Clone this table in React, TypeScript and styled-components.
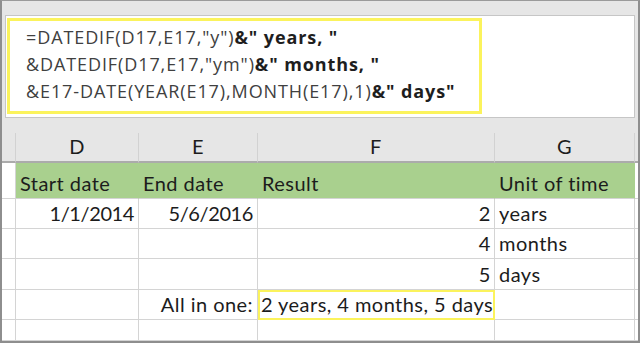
import React from "react";
import styled, { createGlobalStyle } from "styled-components";

const GlobalStyle = createGlobalStyle`
  html, body {
    margin: 0;
    padding: 0;
    background: #ffffff;
  }
  body {
    font-family: "Lato", "Liberation Sans", sans-serif;
  }
`;

const Frame = styled.div`
  width: 640px;
  height: 343px;
  box-sizing: border-box;
  border-top: 1px solid #9a9a9a;
  border-left: 2px solid #8e8e8e;
  border-right: 2px solid #8e8e8e;
  border-bottom: 2px solid #8e8e8e;
  background: #e6e6e6;
  overflow: hidden;
  display: flex;
  flex-direction: column;
`;

const FormulaBar = styled.div`
  margin: 14px 3px 0 3px;
  height: 103px;
  box-sizing: border-box;
  background: #ffffff;
  border: 1px solid #c6c6c6;
  padding: 2px 0 0 1px;
`;

const Highlight = styled.div`
  width: 475px;
  height: 96px;
  box-sizing: border-box;
  border: 3px solid #fbf35c;
  padding: 3px 0 0 16px;
  font-family: "Open Sans", "Noto Sans", sans-serif;
  font-size: 18px;
  letter-spacing: 0.9px;
  line-height: 27px;
  color: #404040;
`;

const FormulaLine = styled.div`
  white-space: pre;
`;

const Literal = styled.b`
  font-weight: 700;
  color: #1e1e1e;
`;

const Sheet = styled.div`
  margin-top: 15px;
  display: grid;
  grid-template-columns: 14px 123px 119px 237px 140px 1fr;
  grid-template-rows: 30px 36px 30px 30px 31px 30px 1fr;
  flex: 1;
  background: #ffffff;
`;

type Kind = "col" | "green" | "body" | "corner";

const Cell = styled.div<{
  $kind?: Kind;
  $align?: "left" | "right" | "center";
  $mark?: boolean;
  $num?: boolean;
}>`
  display: flex;
  align-items: flex-end;
  justify-content: ${(p) =>
    p.$align === "right" ? "flex-end" : p.$align === "center" ? "center" : "flex-start"};
  box-sizing: border-box;
  padding: 0 4px 5px 4px;
  font-size: 20px;
  line-height: 20px;
  letter-spacing: ${(p) => (p.$num ? "-0.4px" : "0.45px")};
  color: #1c1c1c;
  white-space: nowrap;
  overflow: visible;
  background: ${(p) =>
    p.$kind === "col" || p.$kind === "corner" ? "#e6e6e6" : p.$kind === "green" ? "#a9d08e" : "#ffffff"};
  border-right: 1px solid
    ${(p) => (p.$kind === "green" ? "#a9d08e" : p.$kind === "col" || p.$kind === "corner" ? "#d2d2d2" : "#d4d4d4")};
  border-bottom: ${(p) =>
    p.$kind === "col" || p.$kind === "corner" ? "2px solid #ababab" : "1px solid #d4d4d4"};
  ${(p) =>
    p.$mark &&
    `
    outline: 2px solid #fbf35c;
    outline-offset: -2px;
    padding-left: 3px;
  `}
`;

const rows = [
  { d: "1/1/2014", e: "5/6/2016", f: "2", g: "years" },
  { d: "", e: "", f: "4", g: "months" },
  { d: "", e: "", f: "5", g: "days" },
];

const App: React.FC = () => {
  return (
    <>
      <GlobalStyle />
      <Frame>
        <FormulaBar>
          <Highlight>
            <FormulaLine>
              =DATEDIF(D17,E17,"y")<Literal>&amp;" years, "</Literal>
            </FormulaLine>
            <FormulaLine>
              &amp;DATEDIF(D17,E17,"ym")<Literal>&amp;" months, "</Literal>
            </FormulaLine>
            <FormulaLine>
              &amp;E17-DATE(YEAR(E17),MONTH(E17),1)<Literal>&amp;" days"</Literal>
            </FormulaLine>
          </Highlight>
        </FormulaBar>

        <Sheet>
          <Cell $kind="corner" />
          <Cell $kind="col" $align="center">D</Cell>
          <Cell $kind="col" $align="center">E</Cell>
          <Cell $kind="col" $align="center">F</Cell>
          <Cell $kind="col" $align="center">G</Cell>
          <Cell $kind="col" />

          <Cell />
          <Cell $kind="green">Start date</Cell>
          <Cell $kind="green">End date</Cell>
          <Cell $kind="green">Result</Cell>
          <Cell $kind="green">Unit of time</Cell>
          <Cell />

          {rows.map((r, i) => (
            <React.Fragment key={i}>
              <Cell />
              <Cell $align="right" $num>{r.d}</Cell>
              <Cell $align="right" $num>{r.e}</Cell>
              <Cell $align="right" $num>{r.f}</Cell>
              <Cell>{r.g}</Cell>
              <Cell />
            </React.Fragment>
          ))}

          <Cell />
          <Cell />
          <Cell $align="right">All in one:</Cell>
          <Cell $mark>2 years, 4 months, 5 days</Cell>
          <Cell />
          <Cell />

          <Cell />
          <Cell />
          <Cell />
          <Cell />
          <Cell />
          <Cell />
        </Sheet>
      </Frame>
    </>
  );
};

export default App;
